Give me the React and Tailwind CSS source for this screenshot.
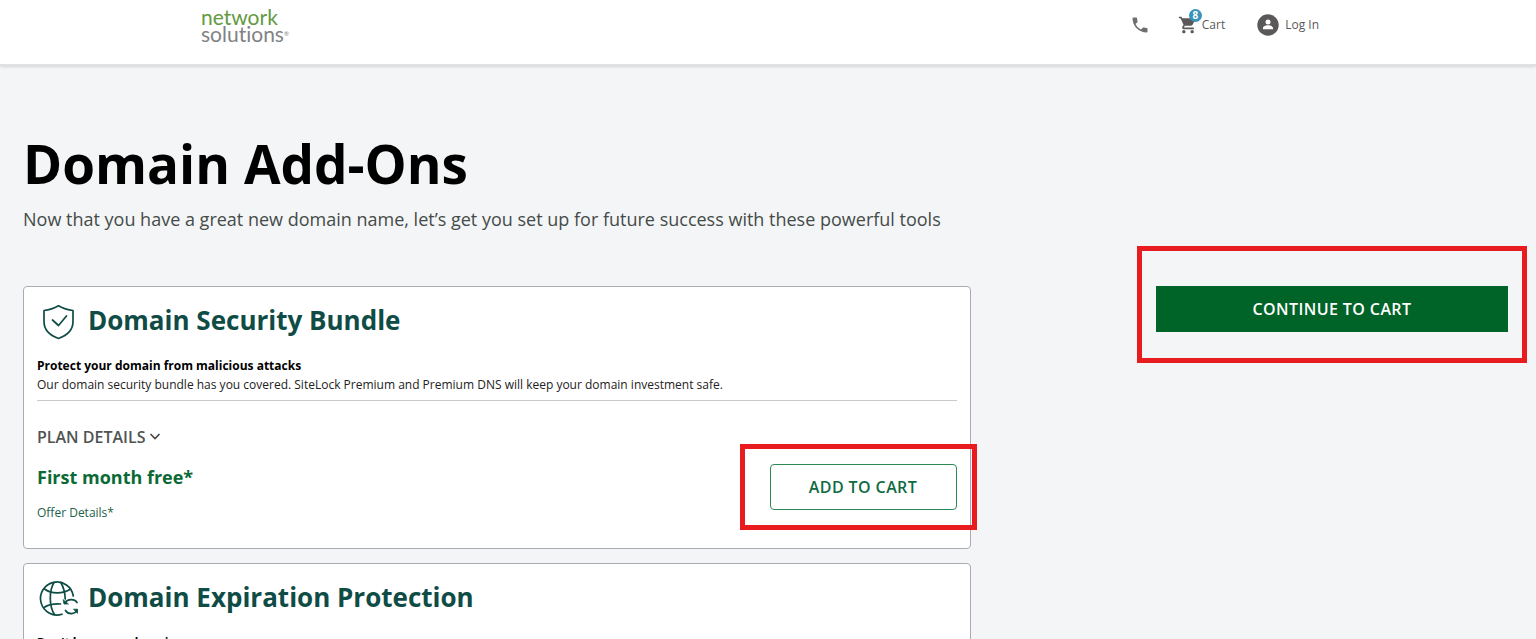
import { useState } from 'react';
import { MdPhone, MdShoppingCart } from 'react-icons/md';

const addOns = [
  {
    id: 'security',
    icon: ShieldIcon,
    title: 'Domain Security Bundle',
    tagline: 'Protect your domain from malicious attacks',
    description: 'Our domain security bundle has you covered. SiteLock Premium and Premium DNS will keep your domain investment safe.',
    offer: 'First month free*',
    highlighted: true,
  },
  {
    id: 'expiration',
    icon: GlobeSyncIcon,
    title: 'Domain Expiration Protection',
    tagline: "Don't lose your domain",
  },
];

function ShieldIcon() {
  return (
    <svg viewBox="0 0 40 40" className="w-10 h-10 shrink-0" fill="none" stroke="#0f4c46" strokeWidth="1.7" strokeLinecap="round" strokeLinejoin="round" aria-hidden="true">
      <path d="M20.5 3.8C16 6.500 11.500 8 6 8.500V19.500C6 28 12 33.500 20.500 36.500C29 33.500 35 28 35 19.500V8.500C29.500 8 25 6.500 20.500 3.800Z" />
      <path d="M14.500 18L20.500 23.500L28.500 14" />
    </svg>
  );
}

function GlobeSyncIcon() {
  return (
    <svg viewBox="0 0 40 40" className="w-10 h-10 shrink-0" fill="none" stroke="#0f4c46" strokeWidth="1.7" strokeLinecap="round" strokeLinejoin="round" aria-hidden="true">
      <path d="M35.300 17A16.500 16.500 0 1 0 24 35.200" />
      <path d="M16 3.500C11 11.500 11 27.500 16.500 35.500" />
      <path d="M22.800 3.500C25.500 8 27 13.500 27.200 20" />
      <path d="M6.500 10C13 15.200 25 15.200 32.500 10M6 28.500C10.500 25.500 16 24.600 22.500 25" />
      <path d="M27 23.800C29.500 19.800 36.500 19.600 39 23.500" />
      <path d="M27.500 31.500C30 35.800 37 35.600 39 31.200" />
      <path d="M25.200 21L26 25H30Z" fill="#0f4c46" strokeWidth="0.8" />
      <path d="M35.800 30.200H39.500V34Z" fill="#0f4c46" strokeWidth="0.8" />
    </svg>
  );
}

function UserIcon() {
  return (
    <svg viewBox="0 0 22 22" className="w-[22px] h-[22px]" aria-hidden="true">
      <circle cx="11" cy="11" r="10.700" fill="#5b5859" />
      <circle cx="11" cy="8" r="2.500" fill="#fff" />
      <path d="M6 15.300V14C6 12 9 11.200 11 11.200S16 12 16 14V15.300Z" fill="#fff" />
    </svg>
  );
}

function Logo() {
  return (
    <a href="#" className="flex flex-col font-['Lato',sans-serif] text-[21px] leading-[17px] [font-variant-ligatures:none]">
      <span className="text-[#639a3f]">network</span>
      <span className="flex text-[#808285]">
        solutions<span className="text-[6px]">®</span>
      </span>
    </a>
  );
}

function Header() {
  return (
    <header className="h-[66px] bg-white border-b-2 border-[#dfe1e4] shadow-sm">
      <div className="flex items-start justify-between pt-2 pl-[201px] pr-[217px]">
        <Logo />
        <nav className="flex items-center gap-7 pt-[5px] text-[12px] leading-6 text-[#5b5859]">
          <a href="#" aria-label="Call us"><MdPhone className="w-5 h-5 text-[#706d6e]" /></a>
          <a href="#" className="flex items-center gap-1">
            <span className="relative">
              <MdShoppingCart className="w-5 h-5" />
              <span className="absolute -top-1.5 -right-1 w-[13px] h-[13px] rounded-full bg-[#3a93b8] text-white text-[10px] leading-[13px] font-bold text-center">8</span>
            </span>
            Cart
          </a>
          <a href="#" className="flex items-center gap-1.5 ml-1">
            <UserIcon />
            Log In
          </a>
        </nav>
      </div>
    </header>
  );
}

function AddOnCard({ addOn }) {
  const [open, setOpen] = useState(false);
  const Icon = addOn.icon;

  return (
    <section className="px-[13px] pt-[15px] pb-[23px] bg-white border border-[#a9adb2] rounded">
      <div className="flex items-start gap-2.5 pl-px">
        <Icon />
        <h2 className="text-[26px] leading-9 font-bold text-[#0f4c46]">{addOn.title}</h2>
      </div>
      <p className="mt-3.5 text-[12px] leading-[19px] font-bold text-black">{addOn.tagline}</p>
      {addOn.description && (
        <p className="pb-1.5 text-[12px] leading-[19px] text-[#222] border-b border-[#c8cacc]">{addOn.description}</p>
      )}
      {addOn.offer && (
        <div className="flex items-start justify-between">
          <div className="flex flex-col items-start pt-6">
            <button type="button" aria-expanded={open} onClick={() => setOpen(!open)} className="flex items-center gap-1 text-[16px] leading-6 font-semibold text-[#4f5453]">
              PLAN DETAILS
              <svg viewBox="0 0 12 12" className="w-3 h-3" fill="none" stroke="#444" strokeWidth="1.6" aria-hidden="true">
                <path d="M1.500 3L6 7.500L10.500 3" />
              </svg>
            </button>
            <p className="mt-4 text-[18px] leading-6 font-bold text-[#0a6a35]">{addOn.offer}</p>
            <a href="#" className="mt-3 text-[12px] leading-6 text-[#1c5f4a]">Offer Details*</a>
          </div>
          <div className="relative mt-[63px]">
            <button type="button" className="block w-[187px] h-[46px] rounded border border-[#2b8a55] bg-white text-[16px] leading-6 font-semibold tracking-wide text-[#0f6b42]">ADD TO CART</button>
            {addOn.highlighted && <div className="absolute -top-5 -left-[30px] -right-5 -bottom-5 border-[5px] border-[#e81b1e] pointer-events-none" />}
          </div>
        </div>
      )}
    </section>
  );
}

export default function App() {
  return (
    <div className="min-h-screen bg-[#f4f5f7] font-['Open_Sans',sans-serif]">
      <Header />
      <main className="pt-[66px] pl-[23px] pr-[9px]">
        <h1 className="text-[53px] leading-[64px] font-bold text-black">Domain Add-Ons</h1>
        <p className="mt-2 text-[18px] leading-[30px] text-[#444b48]">Now that you have a great new domain name, let’s get you set up for future success with these powerful tools</p>
        <div className="flex items-start justify-between pt-[52px]">
          <div className="flex flex-col gap-3.5 w-[63%]">
            {addOns.map((addOn) => (
              <AddOnCard key={addOn.id} addOn={addOn} />
            ))}
          </div>
          <div className="-mt-10 w-[390px] pt-[35px] pb-[26px] px-3.5 border-[5px] border-[#e81b1e]">
            <button type="button" className="block w-full h-[46px] bg-[#006428] text-[16px] leading-6 font-semibold tracking-wide text-white">CONTINUE TO CART</button>
          </div>
        </div>
      </main>
    </div>
  );
}
